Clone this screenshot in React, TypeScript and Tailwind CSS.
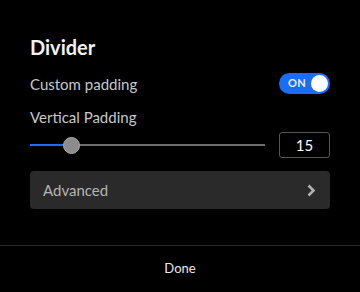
import { useState } from 'react';

export default function App() {
  const [on, setOn] = useState(true);
  const [value, setValue] = useState(15);
  const frac = value / 100;

  return (
    <div className="w-[360px] h-[292px] bg-black flex flex-col text-white font-['Lato',sans-serif]">
      <div className="flex-1 px-[30px] pt-[33px]">
        <h2 className="text-[20px] leading-[28px] font-bold text-[#f2f2f2]">Divider</h2>

        <div className="mt-[12px] flex items-center justify-between h-[21px]">
          <span className="text-[15px] leading-[20px] text-[#c8c8c8]">Custom padding</span>
          <button
            onClick={() => setOn(!on)}
            className="w-[51px] h-[21px] rounded-full bg-[#1a6ef5] flex items-center justify-between pl-[9px] pr-[2px]"
          >
            <span className="text-[11px] font-bold text-[#e8efff] tracking-wide">ON</span>
            <span className="w-[17px] h-[17px] rounded-full bg-white" />
          </button>
        </div>

        <div className="mt-[13px] text-[15px] leading-[20px] text-[#c8c8c8]">Vertical Padding</div>

        <div className="mt-[5px] flex items-center gap-[14px] h-[26px]">
          <div className="relative flex-1 h-[17px] flex items-center">
            <div className="w-full h-[2px] bg-[#6e6e6e]" />
            <div
              className="absolute left-0 h-[2px] bg-[#1a6ef5]"
              style={{ width: `calc(${frac} * (100% - 17px) + 8px)` }}
            />
            <div
              className="absolute w-[17px] h-[17px] rounded-full bg-[#8c8c8c] border border-[#a8a8a8]"
              style={{ left: `calc(${frac} * (100% - 17px))` }}
            />
          </div>
          <input
            value={value}
            onChange={(e) => setValue(Number(e.target.value) || 0)}
            className="w-[51px] h-[26px] rounded-[3px] border border-[#555] bg-black text-center text-[15px] text-white outline-none"
          />
        </div>

        <button className="mt-[13px] w-full h-[38px] rounded-[4px] bg-[#2a2a2a] flex items-center justify-between pl-[13px] pr-[14px]">
          <span className="text-[15px] text-[#b4b4b4]">Advanced</span>
          <svg width="10" height="13" viewBox="0 0 10 13" fill="none">
            <path d="M2.5 1.5 L7.5 6.5 L2.5 11.5" stroke="#b0b0b0" strokeWidth="2.6" />
          </svg>
        </button>
      </div>

      <div className="h-[47px] border-t border-[#2a2a2a] flex items-center justify-center">
        <span className="text-[13px] text-[#e8e8e8]">Done</span>
      </div>
    </div>
  );
}
